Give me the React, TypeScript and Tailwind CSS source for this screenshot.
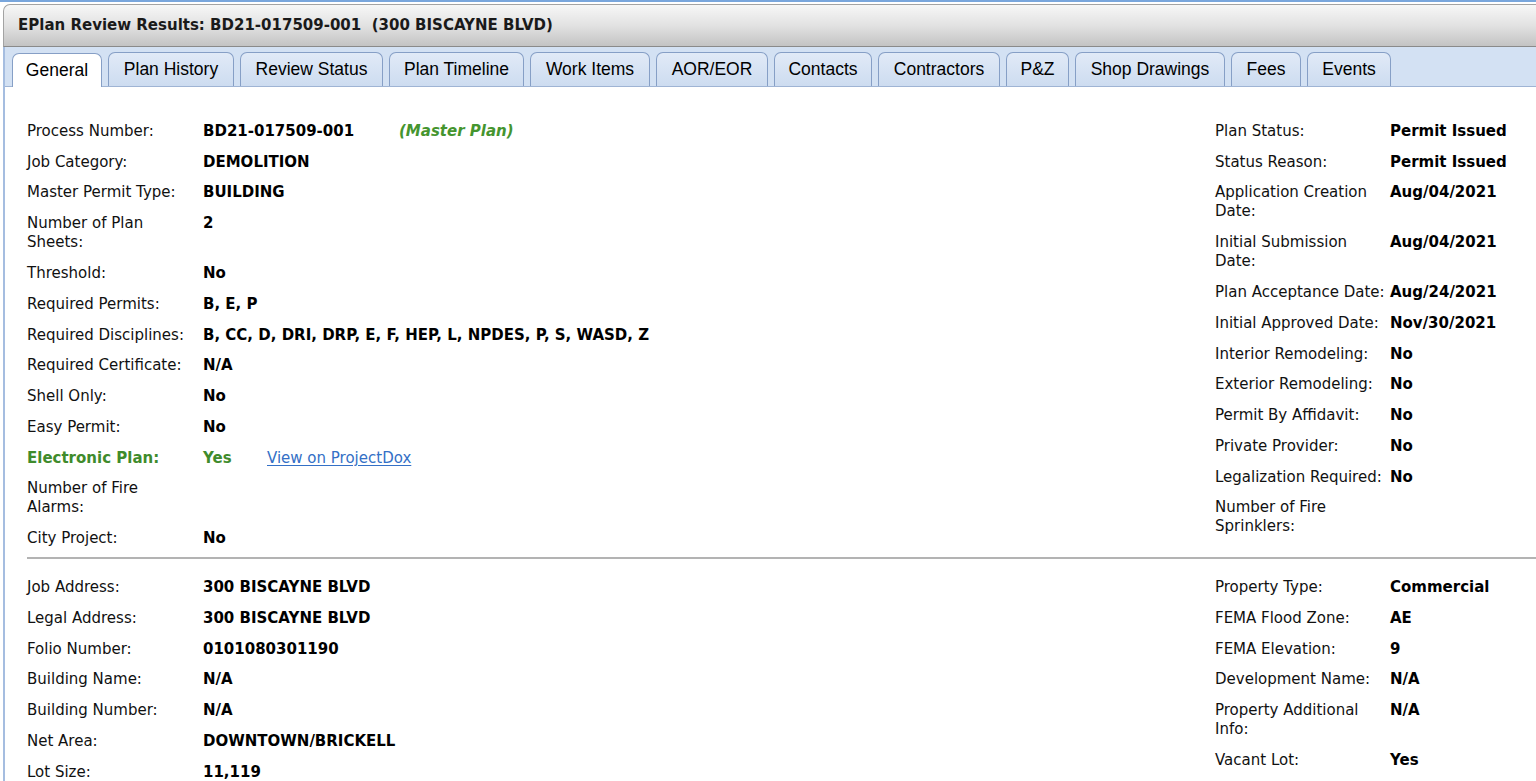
import React from 'react'

type Row = { label: string; value?: string; extra?: React.ReactNode; green?: boolean }

const tabs = [
  { name: 'General', w: 'w-[90px]' },
  { name: 'Plan History', w: 'w-[126px]' },
  { name: 'Review Status', w: 'w-[143px]' },
  { name: 'Plan Timeline', w: 'w-[135px]' },
  { name: 'Work Items', w: 'w-[120px]' },
  { name: 'AOR/EOR', w: 'w-[112px]' },
  { name: 'Contacts', w: 'w-[98px]' },
  { name: 'Contractors', w: 'w-[122px]' },
  { name: 'P&Z', w: 'w-[63px]' },
  { name: 'Shop Drawings', w: 'w-[150px]' },
  { name: 'Fees', w: 'w-[70px]' },
  { name: 'Events', w: 'w-[84px]' },
]

const generalLeft: Row[] = [
  {
    label: 'Process Number:',
    value: 'BD21-017509-001',
    extra: <span className="italic font-bold text-[#45952f]">(Master Plan)</span>,
  },
  { label: 'Job Category:', value: 'DEMOLITION' },
  { label: 'Master Permit Type:', value: 'BUILDING' },
  { label: 'Number of Plan\nSheets:', value: '2' },
  { label: 'Threshold:', value: 'No' },
  { label: 'Required Permits:', value: 'B, E, P' },
  { label: 'Required Disciplines:', value: 'B, CC, D, DRI, DRP, E, F, HEP, L, NPDES, P, S, WASD, Z' },
  { label: 'Required Certificate:', value: 'N/A' },
  { label: 'Shell Only:', value: 'No' },
  { label: 'Easy Permit:', value: 'No' },
  {
    label: 'Electronic Plan:',
    value: 'Yes',
    green: true,
    extra: <a href="#" className="text-[#3470c6] underline underline-offset-2">View on ProjectDox</a>,
  },
  { label: 'Number of Fire\nAlarms:' },
  { label: 'City Project:', value: 'No' },
]

const generalRight: Row[] = [
  { label: 'Plan Status:', value: 'Permit Issued' },
  { label: 'Status Reason:', value: 'Permit Issued' },
  { label: 'Application Creation\nDate:', value: 'Aug/04/2021' },
  { label: 'Initial Submission\nDate:', value: 'Aug/04/2021' },
  { label: 'Plan Acceptance Date:', value: 'Aug/24/2021' },
  { label: 'Initial Approved Date:', value: 'Nov/30/2021' },
  { label: 'Interior Remodeling:', value: 'No' },
  { label: 'Exterior Remodeling:', value: 'No' },
  { label: 'Permit By Affidavit:', value: 'No' },
  { label: 'Private Provider:', value: 'No' },
  { label: 'Legalization Required:', value: 'No' },
  { label: 'Number of Fire\nSprinklers:' },
]

const addressLeft: Row[] = [
  { label: 'Job Address:', value: '300 BISCAYNE BLVD' },
  { label: 'Legal Address:', value: '300 BISCAYNE BLVD' },
  { label: 'Folio Number:', value: '0101080301190' },
  { label: 'Building Name:', value: 'N/A' },
  { label: 'Building Number:', value: 'N/A' },
  { label: 'Net Area:', value: 'DOWNTOWN/BRICKELL' },
  { label: 'Lot Size:', value: '11,119' },
]

const addressRight: Row[] = [
  { label: 'Property Type:', value: 'Commercial' },
  { label: 'FEMA Flood Zone:', value: 'AE' },
  { label: 'FEMA Elevation:', value: '9' },
  { label: 'Development Name:', value: 'N/A' },
  { label: 'Property Additional\nInfo:', value: 'N/A' },
  { label: 'Vacant Lot:', value: 'Yes' },
]

const InfoTable: React.FC<{ rows: Row[]; labelW: string }> = ({ rows, labelW }) => {
  return (
    <div>
      {rows.map((row, index) => (
        <div key={index} className="flex py-[5.9px] leading-[19px]">
          <div
            className={`${labelW} shrink-0 whitespace-pre-line ${
              row.green ? 'font-bold text-[#3f8b2c]' : 'text-[#111]'
            }`}
          >
            {row.label}
          </div>
          <div className="flex whitespace-nowrap">
            {row.extra ? (
              <span
                className={`inline-block font-bold ${
                  row.green ? 'w-[64px] text-[#3f8b2c]' : 'w-[196px] text-black'
                }`}
              >
                {row.value}
              </span>
            ) : (
              <span className="font-bold text-black">{row.value}</span>
            )}
            {row.extra}
          </div>
        </div>
      ))}
    </div>
  )
}

export default function App() {
  return (
    <div className="min-h-screen w-full overflow-hidden bg-white font-['DejaVu_Sans',sans-serif] text-[15px]">
      <div className="h-[2px] bg-[#79a6dc]" />
      <div className="ml-[3px] mt-[2px]">
        {/* header */}
        <div className="flex h-[43px] items-center rounded-tl-[7px] border-l border-t border-[#a3a3a3] border-b-[#8a8a8a] border-b bg-gradient-to-b from-[#f7f7f7] via-[#e2e2e2] to-[#c3c3c3] pl-[14px]">
          <h1 className="whitespace-pre text-[15px] font-bold text-[#1a1a1a]">
            EPlan Review Results: BD21-017509-001  (300 BISCAYNE BLVD)
          </h1>
        </div>

        {/* tabs */}
        <div className="border-l-2 border-[#a5bde0]">
          <div className="flex h-[40px] items-end gap-[6px] border-b border-[#9fb4d4] bg-[#d3e1f3] pl-[7px] font-['Liberation_Sans',Arial,sans-serif] text-[17.5px]">
            {tabs.map((tab, index) => (
              <div
                key={tab.name}
                className={`${tab.w} flex h-[34px] items-center justify-center rounded-t-[7px] border border-[#869fc6] text-black ${
                  index === 0
                    ? 'relative -mb-px border-b-0 bg-white pb-px'
                    : 'border-b-0 bg-gradient-to-b from-[#e1eaf7] to-[#cddcf0]'
                }`}
              >
                {tab.name}
              </div>
            ))}
          </div>

          {/* content */}
          <div className="bg-white pl-[22px] pt-[29px]">
            <div className="flex pb-[3px]">
              <div className="w-[1188px] shrink-0">
                <InfoTable rows={generalLeft} labelW="w-[176px]" />
              </div>
              <InfoTable rows={generalRight} labelW="w-[175px]" />
            </div>
            <div className="h-[2px] bg-[#b3b3b3]" />
            <div className="flex pt-[13px]">
              <div className="w-[1188px] shrink-0">
                <InfoTable rows={addressLeft} labelW="w-[176px]" />
              </div>
              <InfoTable rows={addressRight} labelW="w-[175px]" />
            </div>
          </div>
        </div>
      </div>
    </div>
  )
}
